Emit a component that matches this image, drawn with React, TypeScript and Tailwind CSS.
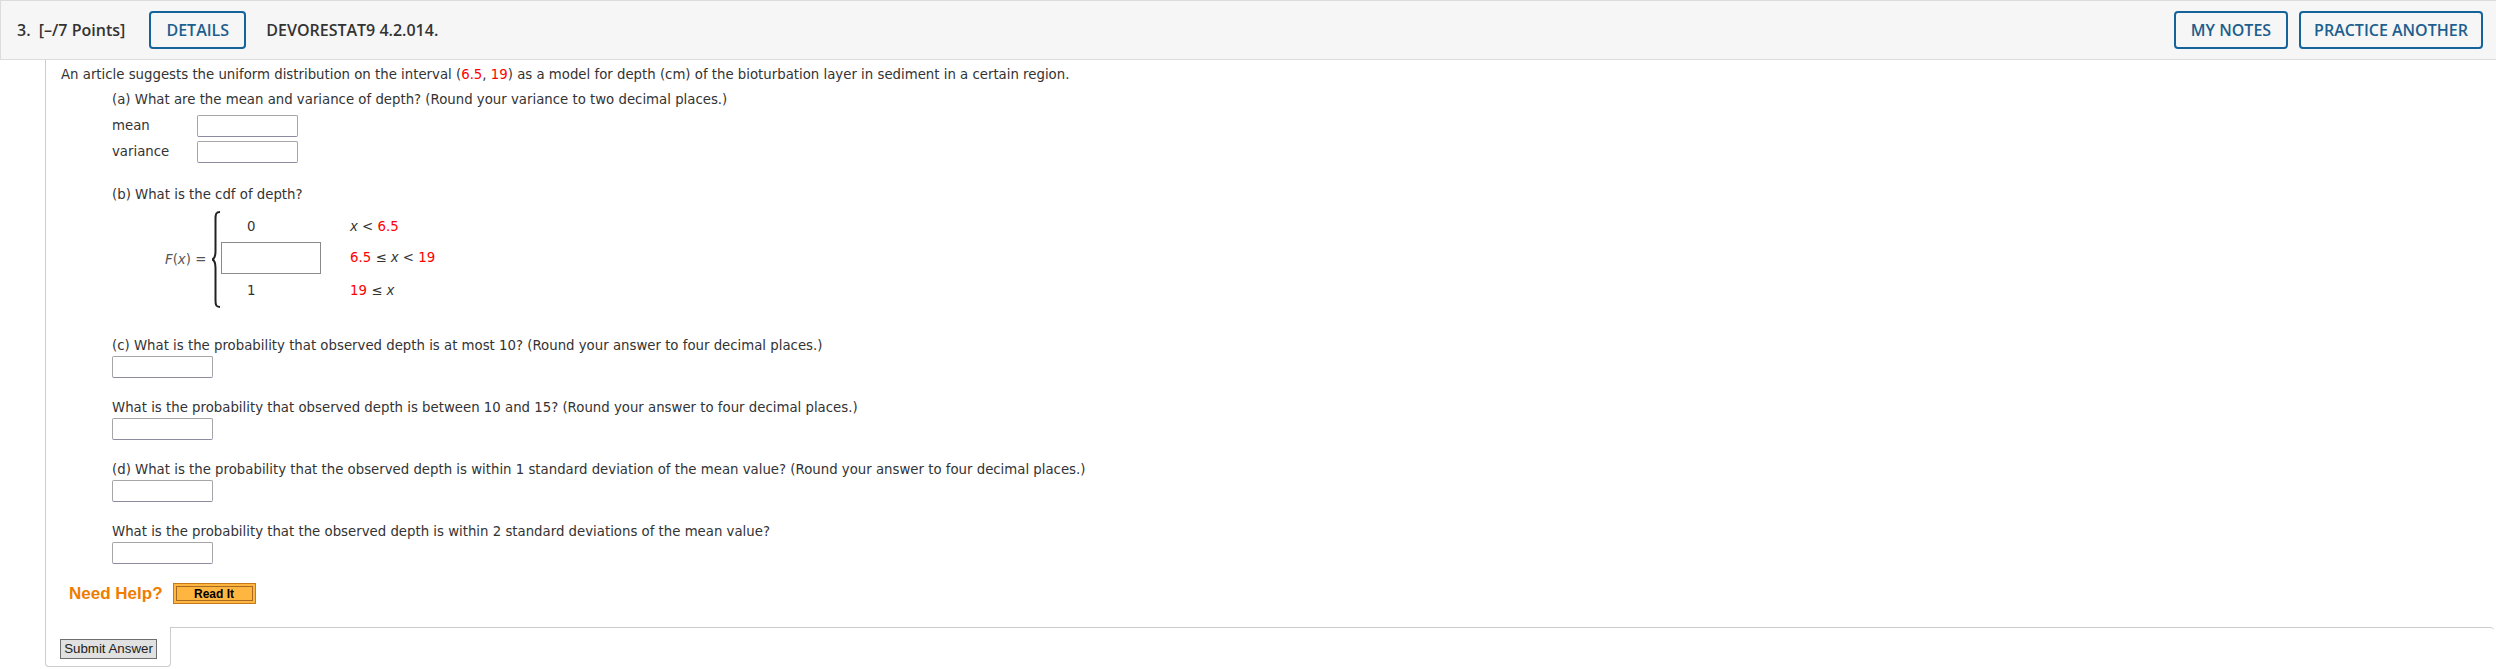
import React from "react";

const body = { fontFamily: '"DejaVu Sans", Verdana, sans-serif' };

function AnswerBox({ className = "" }: { className?: string }) {
  return (
    <input
      type="text"
      className={`block h-[22px] w-[101px] rounded-[2px] border border-[#a6a6a6] border-b-[#8c8ca0] bg-white outline-none ${className}`}
    />
  );
}

function Brace() {
  return (
    <svg width="9" height="97" viewBox="0 0 9 97" className="block">
      <path
        d="M8 1 C4 1 3.5 3 3.5 8 L3.5 40 C3.5 45 2.5 47.5 0.5 48.5 C2.5 49.5 3.5 52 3.5 57 L3.5 89 C3.5 94 4 96 8 96"
        fill="none"
        stroke="#222"
        strokeWidth="2"
      />
    </svg>
  );
}

export default function App() {
  return (
    <div className="w-[2496px] h-[669px] bg-white text-[#333] overflow-hidden">
      {/* header bar */}
      <div
        className="flex h-[60px] items-center justify-between border-y border-l border-[#dcdcdc] bg-[#f6f6f6]"
        style={{ fontFamily: '"Open Sans", sans-serif' }}
      >
        <div className="flex items-center">
          <span className="ml-[16px] text-[16px] font-semibold text-[#333] whitespace-pre">3.  [–/7 Points]</span>
          <button className="ml-[24px] h-[38px] w-[97px] rounded-[4px] border-2 border-[#14639b] text-[16px] font-semibold text-[#1d5f8e]">
            DETAILS
          </button>
          <span className="ml-[20px] text-[16px] font-semibold text-[#333]">DEVORESTAT9 4.2.014.</span>
        </div>
        <div className="mr-[13px] flex items-center gap-[11px]">
          <button className="h-[38px] w-[114px] rounded-[4px] border-2 border-[#14639b] text-[16px] font-semibold text-[#1d5f8e]">
            MY NOTES
          </button>
          <button className="h-[38px] w-[184px] rounded-[4px] border-2 border-[#14639b] text-[16px] font-semibold text-[#1d5f8e]">
            PRACTICE ANOTHER
          </button>
        </div>
      </div>

      {/* question body */}
      <div className="ml-[45px] border-l border-[#cccccc] pl-[15px] pt-[7px] pb-[23px] text-[13.3px] leading-[16px]" style={body}>
        <p>
          An article suggests the uniform distribution on the interval (<span className="text-[#ff0000]">6.5</span>,{" "}
          <span className="text-[#ff0000]">19</span>) as a model for depth (cm) of the bioturbation layer in sediment in a certain region.
        </p>

        <div className="ml-[51px]">
          <p className="mt-[9px]">(a) What are the mean and variance of depth? (Round your variance to two decimal places.)</p>
          <div className="mt-[7px] flex items-center">
            <span className="w-[85px]">mean</span>
            <AnswerBox className="h-[21px] w-[100px]" />
          </div>
          <div className="mt-[4px] flex items-center">
            <span className="w-[85px]">variance</span>
            <AnswerBox className="h-[21px] w-[100px]" />
          </div>

          <p className="mt-[24px]">(b) What is the cdf of depth?</p>
          <div className="mt-[8px] flex items-center">
            <span className="ml-[53px] w-[47px] text-[#555]">
              <i>F</i>(<i>x</i>) =
            </span>
            <Brace />
            <div className="grid h-[97px] grid-cols-[129px_auto] grid-rows-[31px_32px_34px] items-center">
              <span className="pl-[26px]">0</span>
              <span>
                <i>x</i> &lt; <span className="text-[#ff0000]">6.5</span>
              </span>
              <input
                type="text"
                className="block h-[32px] w-[100px] border border-[#8a8a8a] bg-white outline-none"
              />
              <span>
                <span className="text-[#ff0000]">6.5</span> ≤ <i>x</i> &lt; <span className="text-[#ff0000]">19</span>
              </span>
              <span className="pl-[26px]">1</span>
              <span>
                <span className="text-[#ff0000]">19</span> ≤ <i>x</i>
              </span>
            </div>
          </div>

          <p className="mt-[30px]">(c) What is the probability that observed depth is at most 10? (Round your answer to four decimal places.)</p>
          <AnswerBox className="mt-[2px] h-[21px] w-[100px]" />

          <p className="mt-[22px]">What is the probability that observed depth is between 10 and 15? (Round your answer to four decimal places.)</p>
          <AnswerBox className="mt-[2px] h-[21px] w-[100px]" />

          <p className="mt-[22px]">
            (d) What is the probability that the observed depth is within 1 standard deviation of the mean value? (Round your answer to four decimal places.)
          </p>
          <AnswerBox className="mt-[2px] h-[21px] w-[100px]" />

          <p className="mt-[22px]">What is the probability that the observed depth is within 2 standard deviations of the mean value?</p>
          <AnswerBox className="mt-[2px] h-[21px] w-[100px]" />
        </div>

        <div className="mt-[19px] ml-[8px] flex items-center" style={{ fontFamily: '"Liberation Sans", Arial, sans-serif' }}>
          <span className="text-[17px] font-bold text-[#ee7d00]">Need Help?</span>
          <button className="ml-[10px] flex h-[21px] w-[83px] items-center justify-center border border-[#c77a1c] bg-[#ffb640] p-[2px]">
            <span className="flex h-full w-full items-center justify-center border border-[#a86a20] text-[12px] font-bold leading-none text-black">
              Read It
            </span>
          </button>
        </div>
      </div>

      {/* submit row */}
      <div className="flex">
        <div className="ml-[45px] flex h-[40px] w-[126px] items-start rounded-b-[4px] border-x border-b border-[#cccccc] pt-[12px] pl-[14px]">
          <button
            className="h-[20px] w-[97px] whitespace-nowrap border border-[#6e6e6e] bg-[#e1e1e1] px-0 text-[13.3px] leading-none text-[#222]"
            style={{ fontFamily: '"Liberation Sans", Arial, sans-serif' }}
          >
            Submit Answer
          </button>
        </div>
        <div className="flex-1 rounded-tr-[4px] border-t border-[#cccccc] mr-[2px]" />
      </div>
    </div>
  );
}
